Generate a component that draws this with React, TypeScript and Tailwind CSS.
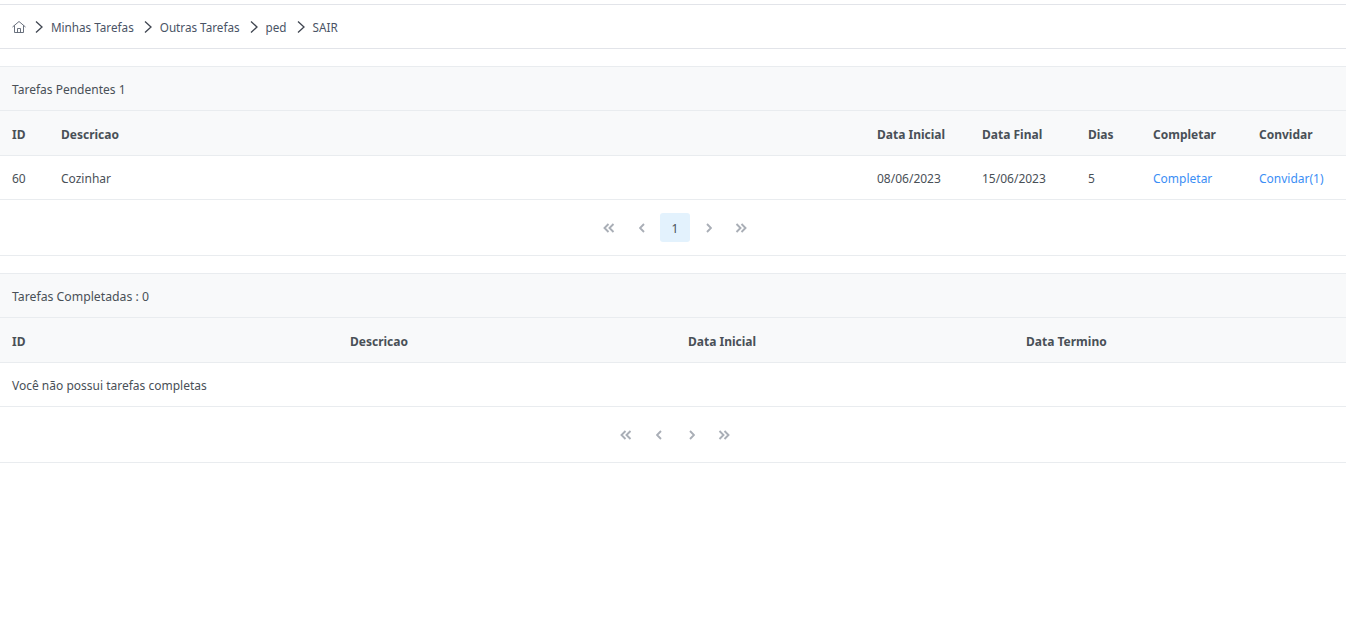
import React from 'react'

const crumbs = ['Minhas Tarefas', 'Outras Tarefas', 'ped', 'SAIR']

const PagerIcon = ({ d, w, className = '' }: { d: string; w: number; className?: string }) => (
  <span className={`w-[33px] h-[29px] flex items-center justify-center ${className}`}>
    <svg width={w} height="10" viewBox={`0 0 ${w} 10`} fill="none" stroke="#a9aeb6" strokeWidth="1.9">
      <path d={d} />
    </svg>
  </span>
)

const Pager = ({ page }: { page?: number }) => (
  <div className="h-[56px] border-b border-[#e9ecef] flex items-start justify-center pt-[13px] pl-[4px]">
    <div className="flex items-center">
      <PagerIcon w={12} d="M5.5 1 1.5 5l4 4M10.5 1l-4 4 4 4" className="pl-[1px]" />
      <PagerIcon w={6} d="M5 1 1 5l4 4" />
      {page && (
        <span className="w-[30px] h-[29px] mx-[2px] rounded-[3px] bg-[#e3f2fd] text-[#495057] flex items-center justify-center pt-[3px]">{page}</span>
      )}
      <PagerIcon w={6} d="M1 1l4 4-4 4" />
      <PagerIcon w={12} d="M1.5 1l4 4-4 4M6.5 1l4 4-4 4" className="pr-[2px]" />
    </div>
  </div>
)

const App = () => {
  const cols = 'grid grid-cols-[49px_816px_105px_106px_65px_106px_1fr] pl-3 items-center'
  const cols2 = 'grid grid-cols-[338px_338px_338px_1fr] pl-3 items-center'
  return (
    <div className="min-h-[634px] bg-white text-[12px] text-[#495057] font-['Noto_Sans',sans-serif]">
      <div className="h-[4px]" />
      <nav className="h-[45px] border-y border-[#e2e4e9] flex items-center pl-3 pt-[1px] text-[#495365] text-[11.7px]">
        <svg className="-mr-[1px]" width="14" height="14" viewBox="0 0 14 14" fill="none" stroke="#5a6270" strokeWidth="0.9">
          <path d="M0.5 7 7 1.5 13.5 7M2.5 5.5V12.5H11.5V5.5M5.5 12.5V8.5H8.5V12.5" />
        </svg>
        {crumbs.map((c) => (
          <React.Fragment key={c}>
            <svg className="ml-[10px] mr-[8px]" width="8" height="12" viewBox="0 0 8 12" fill="none" stroke="#3f4550" strokeWidth="1.3">
              <path d="M1 .5 7 6 1 11.5" />
            </svg>
            <span className="pt-[1px]">{c}</span>
          </React.Fragment>
        ))}
      </nav>

      <section className="mt-[17px]">
        <div className="h-[45px] bg-[#f8f9fa] border-y border-[#e9ecef] flex items-center pl-3 pt-[3px]">Tarefas Pendentes 1</div>
        <div className={`${cols} h-[45px] bg-[#f8f9fa] border-b border-[#e9ecef] font-bold pt-[3px]`}>
          <span>ID</span>
          <span>Descricao</span>
          <span>Data Inicial</span>
          <span>Data Final</span>
          <span>Dias</span>
          <span>Completar</span>
          <span>Convidar</span>
        </div>
        <div className={`${cols} h-[44px] border-b border-[#e9ecef] pt-[2px]`}>
          <span>60</span>
          <span>Cozinhar</span>
          <span>08/06/2023</span>
          <span>15/06/2023</span>
          <span>5</span>
          <a className="text-[#3b8ef5]">Completar</a>
          <a className="text-[#3b8ef5]">Convidar(1)</a>
        </div>
        <Pager page={1} />
      </section>

      <section className="mt-[17px]">
        <div className="h-[45px] bg-[#f8f9fa] border-y border-[#e9ecef] flex items-center pl-3 pt-[3px] text-[12.25px]">Tarefas Completadas : 0</div>
        <div className={`${cols2} h-[45px] bg-[#f8f9fa] border-b border-[#e9ecef] font-bold pt-[3px]`}>
          <span>ID</span>
          <span>Descricao</span>
          <span>Data Inicial</span>
          <span>Data Termino</span>
        </div>
        <div className="h-[44px] border-b border-[#e9ecef] flex items-center pl-3 pt-[2px]">Você não possui tarefas completas</div>
        <Pager />
      </section>
    </div>
  )
}

export default App
